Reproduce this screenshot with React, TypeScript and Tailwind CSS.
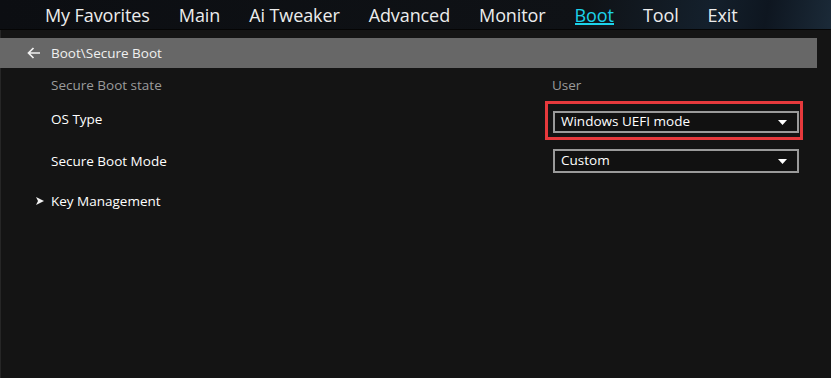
import React from 'react';

const tabs = ['My Favorites', 'Main', 'Ai Tweaker', 'Advanced', 'Monitor', 'Boot', 'Tool', 'Exit'];

const Caret = () => (
  <svg width="9" height="5" viewBox="0 0 9 5" className="shrink-0">
    <path d="M0 0 H9 L4.5 5 Z" fill="#ffffff" />
  </svg>
);

const Select = ({ value, h }: { value: string; h: string }) => (
  <div className={`w-[246px] ${h} border-2 border-[#9a9a9a] bg-[#111111] flex items-center justify-between pl-[6px] pr-[10px]`}>
    <span className="text-[13.5px] text-white leading-none">{value}</span>
    <Caret />
  </div>
);

export default function App() {
  return (
    <div className="w-[831px] h-[378px] bg-[#141414] overflow-hidden font-['Open_Sans',sans-serif] shadow-[inset_1px_0_0_#262626]">
      {/* top menu */}
      <div className="h-[30px] border-b border-[#050505] bg-[linear-gradient(100deg,#0c0e12_0%,#0f1216_70%,#14202c_85%,#0e1620_92%,#1b2a38_100%)] flex items-start pl-[45px] gap-[29px]">
        {tabs.map(t => (
          <div key={t} className="relative h-full flex flex-col items-center">
            <span className={`text-[18px] leading-[30px] tracking-[-0.1px] ${t === 'Boot' ? 'text-[#1cd2ea]' : 'text-[#ececec]'}`}>{t}</span>
            {t === 'Boot' && <div className="absolute left-0 right-0 top-[23px] h-[2px] bg-[#1cd2ea]" />}
          </div>
        ))}
      </div>

      {/* breadcrumb */}
      <div className="mt-[8px] w-[817px] h-[30px] bg-[#676767] flex items-center pl-[27px] gap-[10px]">
        <svg width="14" height="12" viewBox="0 0 14 12" fill="none" stroke="#f2f2f2" strokeWidth="1.7">
          <path d="M13 6 H1.5 M6.5 1 L1.5 6 L6.5 11" />
        </svg>
        <span className="text-[13.5px] text-[#f0f0f0]">Boot\Secure Boot</span>
      </div>

      {/* items */}
      <div className="flex flex-col pl-[51px] mt-[4px]">
        <div className="h-[26px] flex items-center">
          <span className="w-[501px] text-[13.5px] text-[#9b9b9b]">Secure Boot state</span>
          <span className="text-[13.5px] text-[#9b9b9b]">User</span>
        </div>
        <div className="h-[45px] flex items-center">
          <span className="w-[494px] text-[13.5px] text-white -mt-[2px]">OS Type</span>
          <div className="w-[258px] h-[39px] border-[3px] border-[#e6393c] pt-[7px] pl-[5px]">
            <Select value="Windows UEFI mode" h="h-[22px]" />
          </div>
        </div>
        <div className="h-[36px] flex items-center">
          <span className="w-[502px] text-[13.5px] text-white">Secure Boot Mode</span>
          <Select value="Custom" h="h-[24px]" />
        </div>
        <div className="h-[44px] flex items-center -ml-[15px] gap-[7px]">
          <svg width="8" height="8" viewBox="0 0 8 8">
            <path d="M0 0 L8 4 L0 8 L2 4 Z" fill="#f2f2f2" />
          </svg>
          <span className="text-[13.5px] text-white">Key Management</span>
        </div>
      </div>
    </div>
  );
}
